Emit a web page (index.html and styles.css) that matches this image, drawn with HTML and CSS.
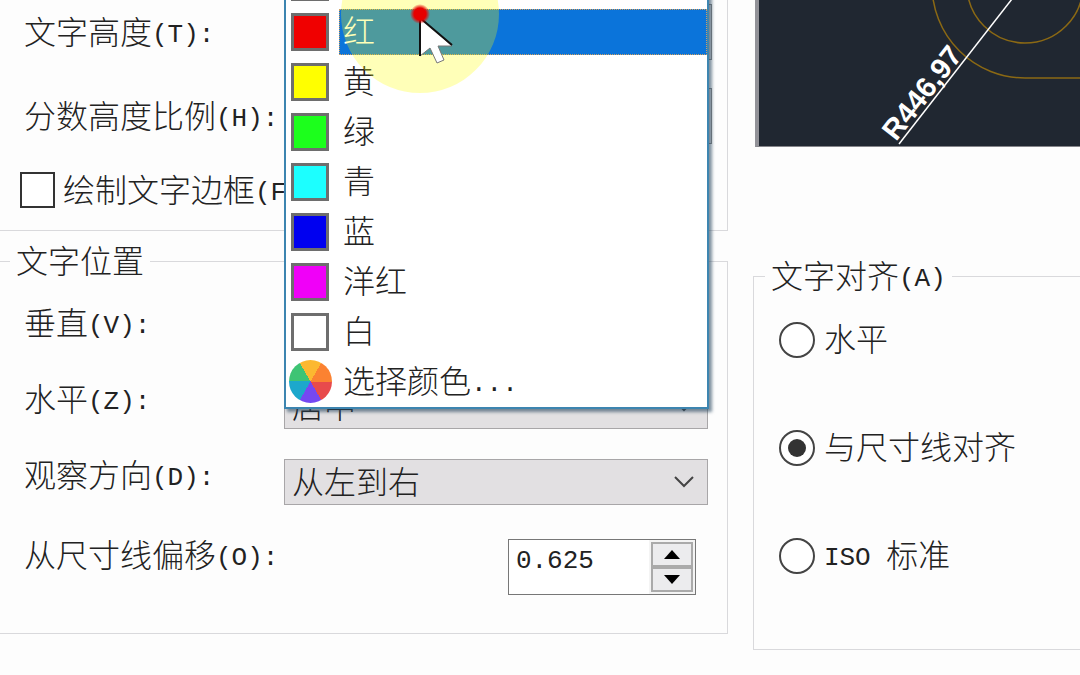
FILE: index.html
```html
<!DOCTYPE html>
<html lang="zh-CN">
<head>
  <meta charset="UTF-8">
  <title>标注样式 - 文字</title>
  <link rel="stylesheet" href="styles.css">
</head>
<body>

  <div class="dialog">
    <div class="left">

      <div class="group appearance">
        <div class="row">
          <label for="textHeight">文字高度<span class="en">(T):</span></label>
          <div class="field">
            <input type="text" id="textHeight" class="text-input">

            <ul class="color-menu">
              <li><button><span class="swatch"></span></button></li>
              <li><button class="selected"><span class="swatch red"></span><span class="name">红</span></button></li>
              <li><button><span class="swatch yellow"></span><span class="name">黄</span></button></li>
              <li><button><span class="swatch green"></span><span class="name">绿</span></button></li>
              <li><button><span class="swatch cyan"></span><span class="name">青</span></button></li>
              <li><button><span class="swatch blue"></span><span class="name">蓝</span></button></li>
              <li><button><span class="swatch magenta"></span><span class="name">洋红</span></button></li>
              <li><button><span class="swatch white"></span><span class="name">白</span></button></li>
              <li><button><span class="wheel"></span><span class="name">选择颜色<span class="en">...</span></span></button></li>
            </ul>

            <svg class="pointer" width="160" height="160" viewBox="0 0 160 160">
              <defs>
                <radialGradient id="dot">
                  <stop offset="0.6" stop-color="#e60000"/>
                  <stop offset="1" stop-color="#e60000" stop-opacity="0"/>
                </radialGradient>
              </defs>
              <circle cx="80" cy="80" r="79" fill="#ffff00" fill-opacity="0.28"/>
              <path d="M80 83V122L90 114L97 129L104 126L98 112H112Z" fill="#fff" stroke="#777" stroke-width="1"/>
              <path d="M80 122V84L112 111" fill="none" stroke="#111" stroke-width="2"/>
              <circle cx="80" cy="80" r="10" fill="url(#dot)"/>
            </svg>
          </div>
        </div>

        <div class="row">
          <label for="fraction">分数高度比例<span class="en">(H):</span></label>
          <div class="field"><input type="text" id="fraction" class="text-input"></div>
        </div>

        <div class="check-row">
          <input type="checkbox" id="frame">
          <label for="frame">绘制文字边框<span class="en">(F)</span></label>
        </div>
      </div>

      <fieldset class="group position">
        <legend>文字位置</legend>
        <div class="row">
          <label for="vertical">垂直<span class="en">(V):</span></label>
          <div class="field">
            <select id="vertical"><option>上</option></select>
          </div>
        </div>
        <div class="row">
          <label for="horizontal">水平<span class="en">(Z):</span></label>
          <div class="field">
            <select id="horizontal"><option>居中</option></select>
            <svg class="chevron" width="20" height="12" viewBox="0 0 20 12"><path d="M1 1L10 10L19 1"/></svg>
          </div>
        </div>
        <div class="row">
          <label for="direction">观察方向<span class="en">(D):</span></label>
          <div class="field">
            <select id="direction"><option>从左到右</option><option>从右到左</option></select>
            <svg class="chevron" width="20" height="12" viewBox="0 0 20 12"><path d="M1 1L10 10L19 1"/></svg>
          </div>
        </div>
        <div class="row offset-row">
          <label for="offset">从尺寸线偏移<span class="en">(O):</span></label>
          <div class="spinner">
            <input type="text" id="offset" value="0.625">
            <div class="spin-buttons">
              <button aria-label="增加"><svg width="16" height="9"><path d="M0 9L8 0L16 9Z"/></svg></button>
              <button aria-label="减少"><svg width="16" height="9"><path d="M0 0L8 9L16 0Z"/></svg></button>
            </div>
          </div>
        </div>
      </fieldset>

    </div>

    <div class="right">
      <div class="preview">
        <svg width="322" height="146" viewBox="0 0 322 146">
          <g fill="none" stroke="#8b6914" stroke-width="1.5">
            <circle cx="266" cy="-15" r="58"/>
            <path d="M173 -15A93 93 0 0 0 266 78H330"/>
          </g>
          <path d="M140 144L253 -1" stroke="#fff" stroke-width="1.5"/>
          <text transform="translate(137 142) rotate(-52)">R446,97</text>
        </svg>
      </div>

      <fieldset class="group align">
        <legend>文字对齐<span class="en">(A)</span></legend>
        <div class="radio-row">
          <input type="radio" name="align" id="alignH">
          <label for="alignH">水平</label>
        </div>
        <div class="radio-row">
          <input type="radio" name="align" id="alignDim" checked>
          <label for="alignDim">与尺寸线对齐</label>
        </div>
        <div class="radio-row">
          <input type="radio" name="align" id="alignIso">
          <label for="alignIso"><span class="en">ISO </span>标准</label>
        </div>
      </fieldset>
    </div>
  </div>

</body>
</html>
```
FILE: styles.css
```css
* {
  box-sizing: border-box;
}

body {
  margin: 0;
  background: #fdfdfd;
  color: #222;
  font-family: "Noto Sans CJK SC", sans-serif;
  font-size: 32px;
  font-weight: 300;
  line-height: 34px;
  overflow: hidden;
}

input, select, button {
  margin: 0;
  font: inherit;
  color: inherit;
}

label, legend {
  white-space: nowrap;
}

/* half-width letters next to the Chinese text */
.en {
  font-family: "Liberation Mono", monospace;
  font-size: 26px;
  line-height: 20px;
  vertical-align: 2px;
  white-space: pre;
}

.dialog {
  display: grid;
  grid-template-columns: 67.4% 1fr;
  column-gap: 25px;
}

.left, .right {
  min-width: 0;
}

.group {
  min-width: 0;
  margin: 0;
  border: 1px solid #d9d9dc;
}

.row {
  display: flex;
}

.row label {
  flex: 0 0 260px;
  padding-bottom: 4px;
}

.field {
  position: relative;
  flex: 1;
}

/* top group */
.appearance {
  padding: 4px 15px 22px 24px;
  border-top: none;
  border-left: none;
}

.appearance .row {
  align-items: center;
  margin-bottom: 28px;
}

.text-input {
  display: block;
  width: 100%;
  height: 56px;
  border: 1px solid #8a8a8a;
  background: #e3e1e3;
}

.check-row {
  display: flex;
  align-items: center;
  gap: 8px;
  height: 36px;
  margin-left: -4px;
}

.check-row label {
  padding-bottom: 4px;
}

input[type="checkbox"] {
  appearance: none;
  width: 35px;
  height: 36px;
  border: 2px solid #333;
  background: #fff;
}

/* color drop-down */
.color-menu {
  position: absolute;
  z-index: 2;
  top: -49px;
  left: 0;
  right: 3px;
  margin: 0;
  padding: 0;
  list-style: none;
  background: #fff;
  border: 2px solid #3d85b0;
  box-shadow: 3px 3px 3px rgba(40, 70, 95, 0.6);
}

.color-menu button {
  display: flex;
  align-items: center;
  width: 100%;
  height: 50px;
  padding: 0 0 1px 5px;
  border: none;
  background: none;
  text-align: left;
}

.swatch {
  width: 38px;
  height: 38px;
  margin-right: 10px;
  border: 3px solid #6e6e6e;
  background: #fff;
}

.red { background: #f00000; }
.yellow { background: #ffff00; }
.green { background: #1cff1c; }
.cyan { background: #1cffff; }
.blue { background: #0000f0; }
.magenta { background: #f000f8; }

.name {
  flex: 1;
  height: 46px;
  padding-left: 3px;
  border: 1px dotted transparent;
  line-height: 38px;
}

.selected .name {
  background: #0b74da;
  border-color: #111;
  outline: 1px dotted #d0a060;
  outline-offset: -1px;
  color: #fff;
}

.wheel {
  width: 43px;
  height: 43px;
  margin-left: -2px;
  margin-right: 7px;
  border-radius: 50%;
  background: conic-gradient(from -30deg, #fcb830 0 60deg, #fb8231 0 120deg, #e84a4c 0 180deg, #7548f2 0 240deg, #1ca8cc 0 300deg, #3ec474 0);
}

.pointer {
  position: absolute;
  z-index: 3;
  top: -70px;
  left: 56px;
  pointer-events: none;
}

/* text position */
.position {
  margin-top: 13px;
  padding: 29px 19px 38px 24px;
  border-left: none;
}

legend {
  padding: 0 6px 4px;
  line-height: 30px;
}

.position legend {
  margin-left: -14px;
}

.position .row {
  margin-bottom: 30px;
}

.position .row label {
  line-height: 28px;
}

.position .offset-row {
  margin-top: 34px;
  margin-bottom: 0;
}

select {
  appearance: none;
  display: block;
  width: 100%;
  height: 46px;
  padding: 0 40px 4px 7px;
  border: 1px solid #a8a6a8;
  border-radius: 0;
  background: #e2e0e2;
}

.chevron {
  position: absolute;
  right: 14px;
  top: 17px;
  fill: none;
  stroke: #444;
  stroke-width: 2;
  pointer-events: none;
}

.spinner {
  display: flex;
  width: 188px;
  height: 56px;
  margin-left: auto;
  margin-right: 12px;
  border: 1px solid #777;
  background: #fff;
}

.spinner input {
  flex: 1;
  min-width: 0;
  padding: 0 0 12px 7px;
  border: none;
  background: none;
  font-family: "Liberation Mono", monospace;
  font-size: 26px;
}

.spin-buttons {
  display: flex;
  flex-direction: column;
  width: 46px;
  padding: 2px;
  background: #f4f4f4;
}

.spin-buttons button {
  display: flex;
  flex: 1;
  align-items: center;
  justify-content: center;
  padding: 0;
  border: 2px solid #aaa;
  background: #ececee;
}

.spin-buttons path {
  fill: #000;
}

/* preview */
.preview {
  height: 147px;
  margin-left: 2px;
  overflow: hidden;
  border-left: 4px solid #929298;
  border-bottom: 1px solid #85858a;
  background: #202731;
}

.preview svg {
  display: block;
}

.preview text {
  fill: #fff;
  font: bold 29px "Liberation Sans", sans-serif;
}

/* text alignment */
.align {
  margin-top: 112px;
  padding: 29px 0 75px 25px;
  border-right: none;
}

.align legend {
  margin-left: -14px;
}

.radio-row {
  display: flex;
  align-items: center;
  gap: 9px;
  height: 36px;
  margin-bottom: 72px;
}

.radio-row label {
  padding-bottom: 6px;
}

.radio-row:last-child {
  margin-bottom: 0;
}

input[type="radio"] {
  appearance: none;
  display: flex;
  align-items: center;
  justify-content: center;
  width: 36px;
  height: 36px;
  border: 2px solid #444;
  border-radius: 50%;
  background: #fff;
}

input[type="radio"]:checked::before {
  content: "";
  width: 18px;
  height: 18px;
  border-radius: 50%;
  background: #333;
}
```
